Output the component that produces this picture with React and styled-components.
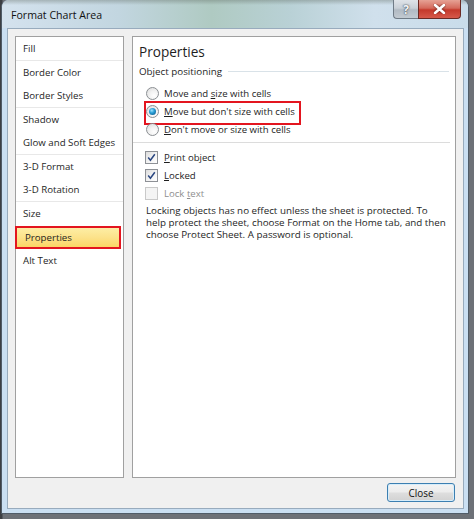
import React from 'react';
import styled, { createGlobalStyle } from 'styled-components';

const GlobalStyle = createGlobalStyle`
  html, body {
    margin: 0;
    padding: 0;
    background: #5d6167;
  }
  * {
    box-sizing: border-box;
  }
`;

const FONT = `'Open Sans', 'Noto Sans', sans-serif`;

const listGroups = [
  ['Fill'],
  ['Border Color', 'Border Styles'],
  ['Shadow', 'Glow and Soft Edges'],
  ['3-D Format', '3-D Rotation'],
  ['Size', 'Properties', 'Alt Text'],
];

function App() {
  const selected = 'Properties';

  return (
    <Screen>
      <GlobalStyle />
      <Window>
        <TitleBar>
          <Title>Format Chart Area</Title>
          <CaptionButtons>
            <HelpButton>?</HelpButton>
            <CloseX>
              <svg width="13" height="10" viewBox="0 0 13 10">
                <path d="M2 1 L11 9 M11 1 L2 9" stroke="#fff" strokeWidth="2.6" strokeLinecap="round" />
              </svg>
            </CloseX>
          </CaptionButtons>
        </TitleBar>

        <Client>
          <Body>
            <CategoryList>
              {listGroups.map((group, gi) => (
                <Group key={gi} $last={gi === listGroups.length - 1}>
                  {group.map((item) => (
                    <Category key={item} $active={item === selected}>
                      {item}
                    </Category>
                  ))}
                </Group>
              ))}
            </CategoryList>

            <Panel>
              <Heading>Properties</Heading>
              <SectionLabel>
                <span>Object positioning</span>
                <Rule />
              </SectionLabel>

              <Options>
                <OptionRow>
                  <Radio />
                  <span>Move and <u>s</u>ize with cells</span>
                </OptionRow>
                <OptionRow $marked>
                  <Radio $checked />
                  <span><u>M</u>ove but don't size with cells</span>
                </OptionRow>
                <OptionRow>
                  <Radio />
                  <span><u>D</u>on't move or size with cells</span>
                </OptionRow>
              </Options>

              <Divider />

              <Options>
                <OptionRow>
                  <Check $checked>
                    <CheckMark />
                  </Check>
                  <span><u>P</u>rint object</span>
                </OptionRow>
                <OptionRow>
                  <Check $checked>
                    <CheckMark />
                  </Check>
                  <span><u>L</u>ocked</span>
                </OptionRow>
                <OptionRow $disabled>
                  <Check $disabled />
                  <span>Lock <u>t</u>ext</span>
                </OptionRow>
              </Options>

              <Note>
                Locking objects has no effect unless the sheet is protected. To
                <br />
                help protect the sheet, choose Format on the Home tab, and then
                <br />
                choose Protect Sheet. A password is optional.
              </Note>
            </Panel>
          </Body>

          <Footer>
            <Button>Close</Button>
          </Footer>
        </Client>
      </Window>
    </Screen>
  );
}

function CheckMark() {
  return (
    <svg width="11" height="11" viewBox="0 0 11 11">
      <path d="M2.2 5.6 L4.4 8.2 L8.8 2.2" fill="none" stroke="#2a4680" strokeWidth="1.5" />
    </svg>
  );
}

const Screen = styled.div`
  width: 474px;
  height: 519px;
  padding: 0 5px 5px 1px;
  background: linear-gradient(90deg, #3c3f44 0px, #3c3f44 2px, #6d7177 3px, #6d7177 100%);
  font-family: ${FONT};
  overflow: hidden;
`;

const Window = styled.div`
  width: 468px;
  height: 514px;
  display: flex;
  flex-direction: column;
  border: 1px solid #505c68;
  border-top: none;
  border-radius: 7px 7px 0 0;
  padding: 0 4px 4px 5px;
  background: #cadff2;
`;

const TitleBar = styled.div`
  height: 28px;
  margin: 0 -4px 0 -5px;
  padding-left: 9px;
  display: flex;
  align-items: center;
  border-radius: 7px 7px 0 0;
  background:
    linear-gradient(180deg, rgba(90, 100, 90, 0.35) 0px, rgba(255, 255, 255, 0) 5px),
    linear-gradient(90deg, #d4e2ee 0%, #c2d6e0 25%, #afcac2 45%, #b9d1d6 62%, #d0e0ec 80%, #c9dcea 100%);
`;

const Title = styled.div`
  font-size: 10.6px;
  color: #111;
  padding-top: 2px;
  flex: 1;
`;

const CaptionButtons = styled.div`
  align-self: flex-start;
  display: flex;
  margin-right: 7px;
`;

const HelpButton = styled.div`
  width: 25px;
  height: 19px;
  display: flex;
  align-items: center;
  justify-content: center;
  border: 1px solid #6f7b86;
  border-top: none;
  border-right: none;
  border-radius: 0 0 0 4px;
  background: linear-gradient(180deg, #dfe4e9 0%, #c9d0d7 45%, #b1bac3 55%, #c2cad1 100%);
  color: #f4f6f8;
  font-size: 12px;
  font-weight: 700;
  text-shadow: 0 0 2px #3d4955, 0 0 1px #3d4955;
`;

const CloseX = styled.div`
  width: 43px;
  height: 19px;
  display: flex;
  align-items: center;
  justify-content: center;
  border: 1px solid #6a2a24;
  border-top: none;
  border-radius: 0 0 4px 0;
  background: linear-gradient(180deg, #e6a295 0%, #d46a5c 45%, #c4392b 55%, #d6594a 100%);

  svg path {
    filter: drop-shadow(0 0 1px #5a1710);
  }
`;

const Client = styled.div`
  flex: 1;
  display: flex;
  flex-direction: column;
  gap: 5px;
  padding: 7px 7px 6px 7px;
  border: 1px solid #98abbd;
  background: #f0f0f0;
`;

const Body = styled.div`
  height: 442px;
  display: flex;
  gap: 8px;
`;

const CategoryList = styled.div`
  width: 109px;
  flex: none;
  background: #fff;
  border: 1px solid #a0a0a0;
`;

const Group = styled.div`
  border-bottom: ${(p) => (p.$last ? 'none' : '1px solid #e8e8e8')};
`;

const Category = styled.div`
  height: 23px;
  display: flex;
  align-items: center;
  padding-left: 7px;
  font-size: 9.7px;
  color: #1e1e1e;
  white-space: nowrap;
  ${(p) =>
    p.$active &&
    `
    margin: 1px 2px 0 -1px;
    padding-left: 8px;
    border: 2px solid #e3151f;
    background: linear-gradient(180deg, #fdeea5 0%, #fce28a 50%, #fbd665 100%);
  `}
`;

const Panel = styled.div`
  flex: 1;
  background: #fff;
  border: 1px solid #a0a0a0;
  padding: 4px 6px 0 6px;
`;

const Heading = styled.div`
  font-size: 13.6px;
  line-height: 22px;
  color: #1e1e1e;
`;

const SectionLabel = styled.div`
  height: 16px;
  display: flex;
  align-items: center;
  gap: 6px;
  font-size: 9.8px;
  color: #1e1e1e;
  white-space: nowrap;
`;

const Rule = styled.div`
  flex: 1;
  height: 1px;
  background: #d9e2e8;
`;

const Options = styled.div`
  margin-top: 5px;
  display: flex;
  flex-direction: column;
`;

const OptionRow = styled.label`
  position: relative;
  height: 18px;
  display: flex;
  align-items: center;
  gap: 5px;
  padding-left: 7px;
  font-size: 9.6px;
  color: ${(p) => (p.$disabled ? '#8f8f8f' : '#1e1e1e')};
  white-space: nowrap;

  u {
    text-underline-offset: 1px;
  }

  ${(p) =>
    p.$marked &&
    `
    &::after {
      content: '';
      position: absolute;
      left: 5px;
      top: -1px;
      width: 153px;
      height: 20px;
      border: 2px solid #e3151f;
    }
  `}
`;

const Radio = styled.span`
  position: relative;
  width: 13px;
  height: 13px;
  flex: none;
  border-radius: 50%;
  border: 1px solid #8b8f93;
  background: radial-gradient(circle at 65% 70%, #ffffff 0%, #f2f2f2 45%, #d8d8d8 100%);

  ${(p) =>
    p.$checked &&
    `
    &::after {
      content: '';
      position: absolute;
      left: 2px;
      top: 2px;
      width: 7px;
      height: 7px;
      border-radius: 50%;
      background: radial-gradient(circle at 40% 35%, #9fe3ff 0%, #2a9fd6 40%, #0a4e80 100%);
    }
  `}
`;

const Check = styled.span`
  width: 13px;
  height: 13px;
  flex: none;
  display: flex;
  align-items: center;
  justify-content: center;
  margin-left: -1px;
  margin-right: 1px;
  border: 1px solid ${(p) => (p.$disabled ? '#c9c9c9' : '#8e9196')};
  background: ${(p) =>
    p.$disabled
      ? '#f4f4f4'
      : 'linear-gradient(135deg, #dcdcdc 0%, #f0f0f0 45%, #ffffff 100%)'};
`;

const Divider = styled.div`
  height: 1px;
  margin: 4px -1px 1px -6px;
  background: #dcdcdc;
`;

const Note = styled.div`
  margin-top: 3px;
  padding-left: 7px;
  font-size: 9.8px;
  line-height: 12.2px;
  color: #1e1e1e;
  white-space: nowrap;
`;

const Footer = styled.div`
  display: flex;
  justify-content: flex-end;
  padding-right: 1px;
`;

const Button = styled.button`
  width: 68px;
  height: 19px;
  padding: 0;
  border: 1px solid #3c7fb1;
  border-radius: 3px;
  font-family: ${FONT};
  font-size: 9.9px;
  color: #111;
  background: linear-gradient(180deg, #f4f4f4 0%, #ececec 48%, #dedede 52%, #d2d2d2 100%);
  box-shadow: inset 0 0 0 1px #d7edfa;
  cursor: pointer;
`;

export default App;
